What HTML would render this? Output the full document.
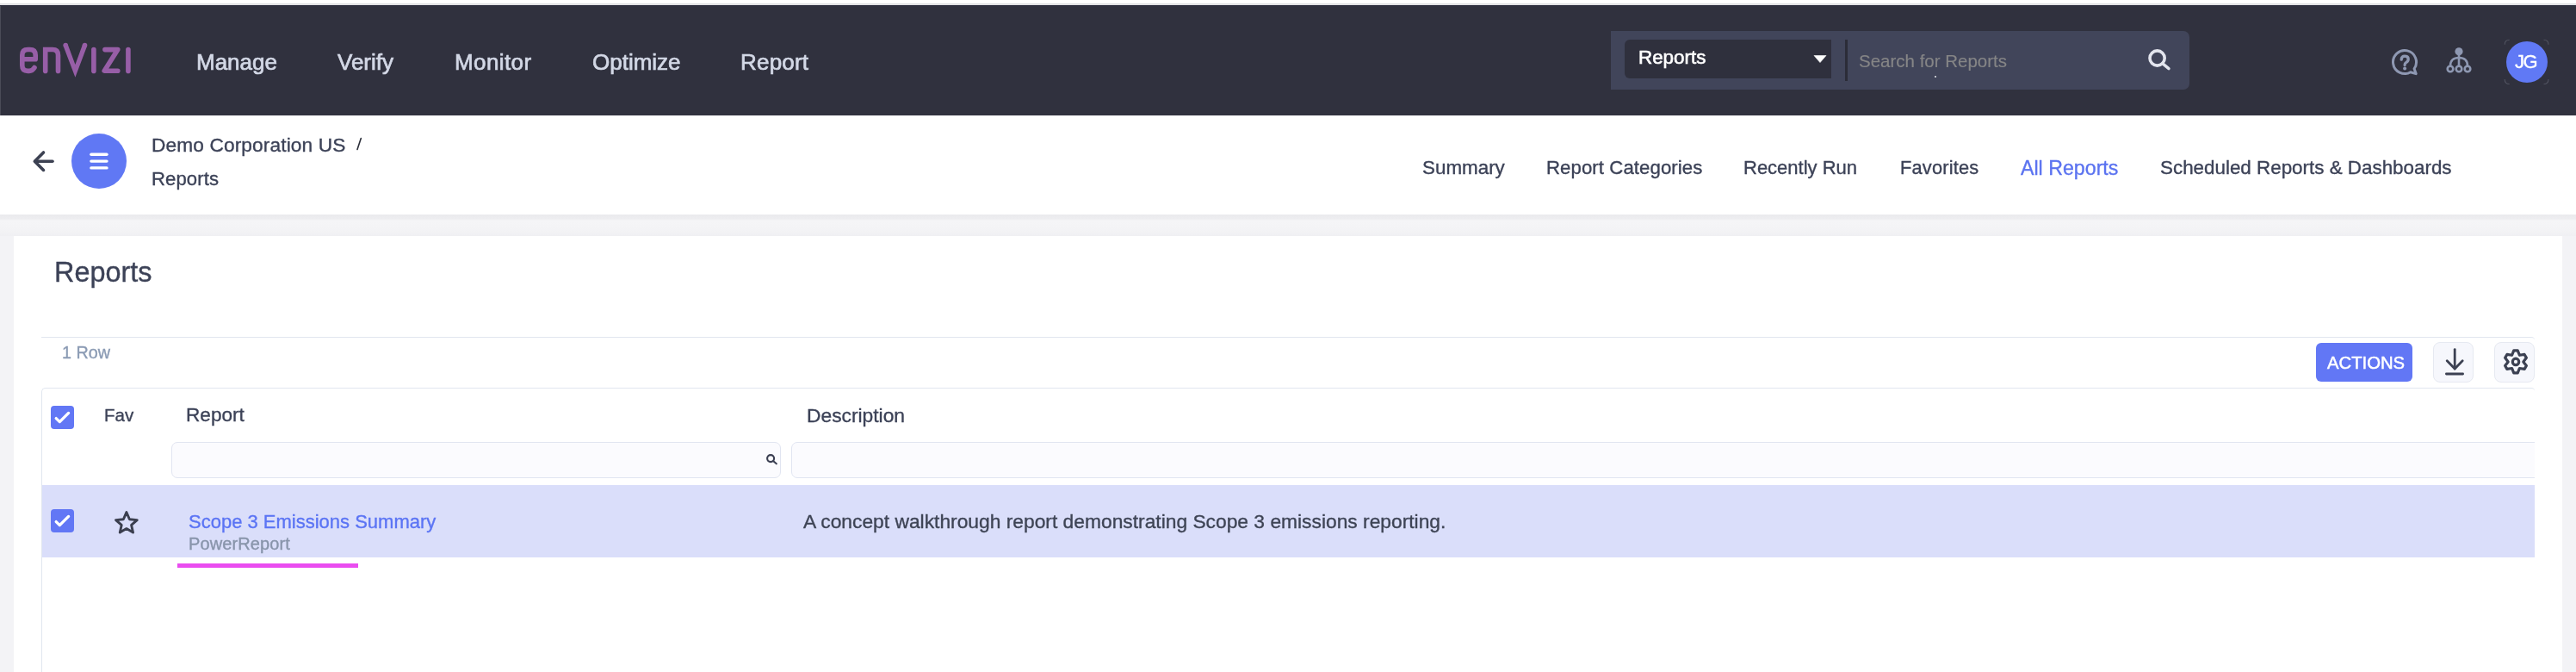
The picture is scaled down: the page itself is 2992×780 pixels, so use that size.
<!DOCTYPE html>
<html><head><meta charset="utf-8">
<style>
html,body{margin:0;padding:0;}
body{width:2992px;height:780px;overflow:hidden;position:relative;background:#f3f3f6;font-family:"Liberation Sans",sans-serif;}
.a{position:absolute;white-space:nowrap;}
.t{position:absolute;white-space:nowrap;line-height:1;-webkit-text-stroke:0.35px currentColor;will-change:transform;}
#topstrip{left:0;top:0;width:2992px;height:6px;background:#fff;}
#topline1{left:0;top:4px;width:2992px;height:1px;background:#dcdcdf;}
#topline2{left:0;top:5px;width:2992px;height:1px;background:#e4e5e6;}
#nav{left:0;top:6px;width:2992px;height:128px;background:#30313e;}
#navtop{left:0;top:6px;width:2992px;height:1px;background:#2a2b3c;}
.nv{color:#d3d8e6;font-size:26px;-webkit-text-stroke:0.7px currentColor;}
#sub{left:0;top:134px;width:2992px;height:115px;background:#fff;}
#shadow{left:0;top:249px;width:2992px;height:25px;background:linear-gradient(#eaeaed 0px,#ededf0 5px,#f5f5f7 7px,#f4f4f6 15px,#f0f0f3 25px);}
#card{left:16px;top:274px;width:2960px;height:520px;background:#fff;}
.dk{color:#3c4257;}
</style></head>
<body>
<div class="a" id="topstrip"></div>
<div class="a" id="topline1"></div>
<div class="a" id="topline2"></div>
<div class="a" id="nav"></div>
<div class="a" id="navtop"></div>
<div class="a" style="left:0;top:7px;width:1px;height:127px;background:#4a4b57;"></div>

<!-- logo -->
<svg class="a" style="left:0;top:0" width="170" height="134" viewBox="0 0 170 134">
 <g fill="none" stroke="#975ea7" stroke-width="5.6" stroke-linecap="round" stroke-linejoin="round">
  <path d="M25.8 68.8 H41.2 V64 Q41.2 57.5 34.7 57.5 H32.3 Q25.8 57.5 25.8 64 V76 Q25.8 82.4 32.3 82.4 H34 Q37.5 82.4 40 78.5"/>
  <path d="M52.7 82.4 V57.5 H61 Q67.5 57.5 67.5 64 V82.4" stroke-linejoin="miter"/>
  <path d="M108.9 57.5 V82.4"/>
  <path d="M121.9 57.6 H136.8 L121.2 82.2 H136.8"/>
  <path d="M148.9 57.5 V82.4"/>
 </g>
 <g fill="#975ea7">
  <circle cx="76.2" cy="52.6" r="2.8"/><circle cx="98.5" cy="52.6" r="2.8"/>
  <polygon points="73.6,53.4 78.8,51.8 87.4,75 95.9,51.8 101.1,53.4 87.4,89.8"/>
 </g>
</svg>

<div class="t nv" style="left:228px;top:58.5px;">Manage</div>
<div class="t nv" style="left:392px;top:58.5px;">Verify</div>
<div class="t nv" style="left:527.5px;top:58.5px;letter-spacing:0.4px;">Monitor</div>
<div class="t nv" style="left:687.5px;top:58.5px;">Optimize</div>
<div class="t nv" style="left:860px;top:58.5px;letter-spacing:0.2px;">Report</div>

<!-- search -->
<div class="a" style="left:1871px;top:36px;width:672px;height:68px;background:#41455a;border-radius:0 7px 7px 0;"></div>
<div class="a" style="left:1887px;top:46px;width:240px;height:45px;background:#2f303d;border-radius:6px 0 0 6px;"></div>
<div class="t" style="left:1902.5px;top:56px;font-size:22.4px;color:#fff;-webkit-text-stroke:0.6px #fff;">Reports</div>
<svg class="a" style="left:2105px;top:63px" width="18" height="12"><polygon points="2,1.5 16,1.5 9,9.6" fill="#fff" stroke="#fff" stroke-width="0.6" stroke-linejoin="round"/></svg>
<div class="a" style="left:2143px;top:46px;width:3px;height:48px;background:#2b2c38;"></div>
<div class="t" style="left:2159px;top:61px;font-size:20.5px;color:#858586;-webkit-text-stroke:0.15px #858586;">Search for Reports</div>
<div class="a" style="left:2246.5px;top:88px;width:2px;height:2px;border-radius:1px;background:#e8e8ee;"></div>
<svg class="a" style="left:2490px;top:55px" width="36" height="32" viewBox="0 0 36 32">
 <circle cx="15.6" cy="12.5" r="8.6" fill="none" stroke="#e3e5ee" stroke-width="3.6"/>
 <line x1="21.7" y1="18.6" x2="29" y2="24.6" stroke="#e3e5ee" stroke-width="3.4" stroke-linecap="round"/>
</svg>

<!-- right icons -->
<svg class="a" style="left:2770px;top:50px" width="46" height="44" viewBox="0 0 46 44">
 <path d="M34.06 29.74 A13.5 13.5 0 1 0 29.75 33.69 L36.2 35.6 Z" fill="none" stroke="#8e98b2" stroke-width="3" stroke-linejoin="round"/>
 <path d="M19.2 19.2 Q19.2 15.2 23.2 15.2 Q27.2 15.2 27.2 18.8 Q27.2 21.2 24.6 22.6 Q23.1 23.5 23.1 25.6" fill="none" stroke="#8e98b2" stroke-width="3.3" stroke-linecap="round"/>
 <circle cx="23.1" cy="29.6" r="2" fill="#8e98b2"/>
</svg>
<svg class="a" style="left:2836px;top:50px" width="40" height="40" viewBox="0 0 40 40">
 <g fill="none" stroke="#8e98b2" stroke-width="2.6">
  <line x1="20" y1="10" x2="20" y2="26.5"/>
  <path d="M10 26.5 Q10 17 20 17 Q30 17 30 26.5"/>
  <circle cx="10" cy="30" r="3.3"/><circle cx="20" cy="30" r="3.3"/><circle cx="30" cy="30" r="3.3"/>
 </g>
 <circle cx="20" cy="9.8" r="4.6" fill="#8e98b2"/>
</svg>
<svg class="a" style="left:2895px;top:38px" width="80" height="70" viewBox="0 0 80 70"><path d="M14.2 13.8 Q14.2 8.3 19.7 8.3 M59.5 8.3 Q65.0 8.3 65.0 13.8 M65.0 54.0 Q65.0 59.5 59.5 59.5 M19.7 59.5 Q14.2 59.5 14.2 54.0" fill="none" stroke="rgba(170,172,185,0.28)" stroke-width="1.1"/></svg>
<div class="a" style="left:2911px;top:48px;width:48px;height:48px;border-radius:50%;background:#6079f5;"></div>
<div class="t" style="left:2921px;top:61px;font-size:22px;color:#fff;letter-spacing:-1.5px;">JG</div>

<!-- sub header -->
<div class="a" id="sub"></div>
<div class="a" id="shadow"></div>
<svg class="a" style="left:30px;top:168px" width="40" height="36" viewBox="0 0 40 36">
 <g fill="none" stroke="#3c4152" stroke-width="3.6" stroke-linecap="round" stroke-linejoin="round">
  <path d="M31 19.2 H11"/><path d="M20.5 9 L10.3 19.2 L20.5 29.4"/>
 </g>
</svg>
<div class="a" style="left:83px;top:155px;width:64px;height:64px;border-radius:50%;background:#6078f4;"></div>
<svg class="a" style="left:83px;top:155px" width="64" height="64" viewBox="0 0 64 64">
 <g stroke="#fff" stroke-width="3.4" stroke-linecap="round">
  <line x1="22.9" y1="24.2" x2="41" y2="24.2"/><line x1="22.9" y1="32.1" x2="41" y2="32.1"/><line x1="22.9" y1="39.9" x2="41" y2="39.9"/>
 </g>
</svg>
<div class="t dk" style="left:175.5px;top:157px;font-size:22.7px;letter-spacing:0.12px;">Demo Corporation US</div>
<svg class="a" style="left:410px;top:155px" width="14" height="24"><line x1="9.3" y1="5.5" x2="5" y2="18.5" stroke="#2a2d38" stroke-width="1.6" stroke-linecap="round"/></svg>
<div class="t dk" style="left:176px;top:197px;font-size:22.1px;letter-spacing:0.1px;">Reports</div>

<div class="t dk" style="left:1651.5px;top:184px;font-size:22.4px;">Summary</div>
<div class="t dk" style="left:1796px;top:184px;font-size:22.2px;letter-spacing:0.08px;">Report Categories</div>
<div class="t dk" style="left:2025px;top:184px;font-size:22px;">Recently Run</div>
<div class="t dk" style="left:2207px;top:184px;font-size:21.8px;letter-spacing:0.2px;">Favorites</div>
<div class="t" style="left:2346.5px;top:184px;font-size:23.2px;color:#5b73f0;">All Reports</div>
<div class="t dk" style="left:2508.5px;top:184px;font-size:22.4px;">Scheduled Reports &amp; Dashboards</div>

<!-- card -->
<div class="a" id="card"></div>
<div class="t dk" style="left:63px;top:300px;font-size:32.4px;">Reports</div>

<!-- toolbar -->
<div class="a" style="left:48px;top:391px;width:2896px;height:59px;border-top:1px solid #e1e6ef;border-radius:0 4px 0 0;box-sizing:border-box;"></div>
<div class="t" style="left:72px;top:400px;font-size:19.75px;color:#8b9bb4;">1 Row</div>
<div class="a" style="left:2690px;top:398px;width:112px;height:45px;border-radius:6px;background:#6277f5;"></div>
<div class="t" style="left:2703px;top:410.5px;font-size:20.3px;color:#fff;-webkit-text-stroke:0.5px #fff;">ACTIONS</div>
<div class="a" style="left:2826px;top:397px;width:47px;height:47px;border-radius:8px;background:#f6f7fc;border:1px solid #e6e9f1;box-sizing:border-box;"></div>
<svg class="a" style="left:2826px;top:397px" width="47" height="47" viewBox="0 0 47 47">
 <g fill="none" stroke="#3c4152" stroke-width="2.8" stroke-linecap="round" stroke-linejoin="round">
  <path d="M25.2 8.6 V31"/><path d="M16.2 21.8 L25.2 31 L34.2 21.8"/><path d="M15.4 37 H34.6"/>
 </g>
</svg>
<div class="a" style="left:2897px;top:397px;width:47px;height:47px;border-radius:8px;background:#f6f7fc;border:1px solid #e6e9f1;box-sizing:border-box;"></div>
<svg class="a" style="left:2897px;top:397px" width="47" height="47" viewBox="0 0 47 47">
 <path id="gear" fill="none" stroke="#3c4152" stroke-width="3.2" stroke-linejoin="round" d="M22.75 9.89 L27.25 9.89 L29.40 15.28 L35.14 14.45 L37.39 18.34 L33.80 22.90 L37.39 27.46 L35.14 31.35 L29.40 30.52 L27.25 35.91 L22.75 35.91 L20.60 30.52 L14.86 31.35 L12.61 27.46 L16.20 22.90 L12.61 18.34 L14.86 14.45 L20.60 15.28 Z"/>
 <circle cx="25" cy="22.9" r="3.7" fill="none" stroke="#3c4152" stroke-width="3.2"/>
</svg>

<!-- table -->
<div class="a" style="left:48px;top:450px;width:2896px;height:340px;border-top:1px solid #e1e6ef;border-left:1px solid #e1e6ef;border-radius:5px 4px 0 0;box-sizing:border-box;"></div>
<div class="a" style="left:59px;top:471px;width:27px;height:27px;border-radius:4px;background:#6277f5;"></div>
<svg class="a" style="left:59px;top:471px" width="27" height="27" viewBox="0 0 27 27"><path d="M6.2 14.6 L10.3 18.6 L20.6 8.4" fill="none" stroke="#fff" stroke-width="3.3" stroke-linecap="round" stroke-linejoin="round"/></svg>
<div class="t dk" style="left:120.5px;top:472px;font-size:20.5px;">Fav</div>
<div class="t dk" style="left:216px;top:471px;font-size:22.6px;">Report</div>
<div class="t dk" style="left:936.5px;top:470.5px;font-size:22.8px;">Description</div>

<div class="a" style="left:199px;top:513px;width:708px;height:42px;border:1px solid #e1e5f1;border-radius:7px;background:#fbfbfe;box-sizing:border-box;"></div>
<svg class="a" style="left:886px;top:524px" width="20" height="20" viewBox="0 0 20 20">
 <circle cx="9.1" cy="8.1" r="4.0" fill="none" stroke="#3b3f52" stroke-width="2.1"/>
 <line x1="12" y1="11" x2="15.8" y2="14.3" stroke="#3b3f52" stroke-width="2.1" stroke-linecap="round"/>
</svg>
<div class="a" style="left:919px;top:513px;width:2040px;height:42px;clip-path:inset(0 15px 0 0);border:1px solid #e1e5f1;border-radius:7px;background:#fbfbfe;box-sizing:border-box;"></div>

<!-- row -->
<div class="a" style="left:49px;top:563px;width:2895px;height:84px;background:#dadefa;"></div>
<div class="a" style="left:59px;top:591px;width:27px;height:27px;border-radius:4px;background:#6277f5;"></div>
<svg class="a" style="left:59px;top:591px" width="27" height="27" viewBox="0 0 27 27"><path d="M6.2 14.6 L10.3 18.6 L20.6 8.4" fill="none" stroke="#fff" stroke-width="3.3" stroke-linecap="round" stroke-linejoin="round"/></svg>
<svg class="a" style="left:130px;top:590px" width="34" height="34" viewBox="0 0 34 34">
 <path id="star" fill="none" stroke="#3b3f4f" stroke-width="2.9" stroke-linejoin="round" d="M16.90 4.60 L20.43 12.75 L29.26 13.58 L22.61 19.45 L24.54 28.12 L16.90 23.60 L9.26 28.12 L11.19 19.45 L4.54 13.58 L13.37 12.75 Z"/>
</svg>
<div class="t" style="left:218.8px;top:595px;font-size:22px;color:#5b74f4;">Scope 3 Emissions Summary</div>
<div class="t" style="left:219px;top:621px;font-size:20px;color:#8894aa;letter-spacing:0.1px;">PowerReport</div>
<div class="t" style="left:932.5px;top:594px;font-size:22.8px;color:#3e4455;">A concept walkthrough report demonstrating Scope 3 emissions reporting.</div>
<div class="a" style="left:206px;top:654px;width:210px;height:5px;background:#ea4cf0;"></div>

</body></html>
